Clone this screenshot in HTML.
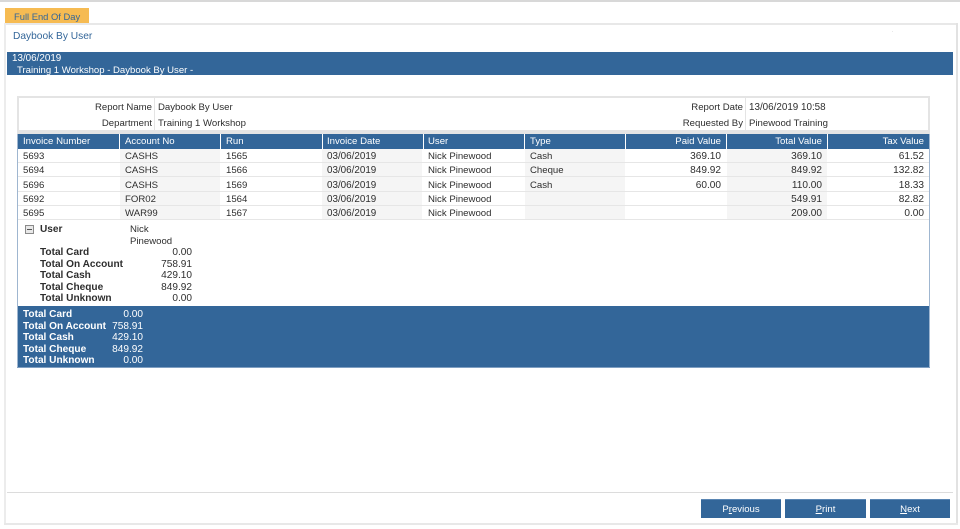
<!DOCTYPE html>
<html><head><meta charset="utf-8"><style>
html,body{margin:0;padding:0;background:#fff}
#p{position:relative;width:960px;height:529px;overflow:hidden;background:#fff;font:9.6px/15px "Liberation Sans",sans-serif;color:#2e2e2e}
#p div{position:absolute}
.t{white-space:nowrap;height:13px}
.r{text-align:right;white-space:nowrap;height:13px}
.h{color:#fff}
.b{font-weight:bold;font-size:10.1px}
.w{color:#fff}
.n{font-size:10.1px}
.d{font-size:9.85px}
.btn{background:#336699;color:#fff;top:499px;height:19px;line-height:20px;text-align:center;border-top:1px solid #5a86b3;box-sizing:border-box}
u{text-decoration:underline}
</style></head><body><div id="p">
<div style="left:0;top:0;width:960px;height:2px;background:#d8d8d8"></div>
<div style="left:4px;top:23px;width:953px;height:2px;background:#e8e8e8"></div>
<div style="left:4px;top:23px;width:2px;height:502px;background:#ececec"></div>
<div style="left:956px;top:23px;width:2px;height:502px;background:#e2e2e2"></div>
<div style="left:4px;top:523px;width:954px;height:2px;background:#e8e8e8"></div>
<div style="left:5px;top:8px;width:84px;height:15px;background:#f6bb52"></div>
<div class="t" style="left:14px;top:9px;color:#336699;font-size:9.4px">Full End Of Day</div>
<div class="t" style="left:13px;top:29px;color:#336699;font-size:10.2px">Daybook By User</div>
<div style="left:892px;top:31px;width:1px;height:1px;background:#e8e8e8"></div>
<div style="left:7px;top:52px;width:946px;height:23px;background:#336699"></div>
<div class="t w" style="left:12px;top:51px;font-size:9.85px">13/06/2019</div>
<div class="t w" style="left:17px;top:63px;font-size:9.55px">Training 1 Workshop - Daybook By User -</div>

<div style="left:17px;top:96px;width:909px;height:32px;border:2px solid #e4e4e4"></div>
<div style="left:154px;top:97px;width:1px;height:33px;background:#e4e4e4"></div>
<div style="left:745px;top:97px;width:1px;height:33px;background:#e4e4e4"></div>
<div class="r" style="left:30px;width:122px;top:100px">Report Name</div>
<div class="r" style="left:30px;width:122px;top:116px">Department</div>
<div class="t" style="left:158px;top:100px">Daybook By User</div>
<div class="t" style="left:158px;top:116px">Training 1 Workshop</div>
<div class="r" style="left:640px;width:103px;top:100px">Report Date</div>
<div class="r" style="left:640px;width:103px;top:116px">Requested By</div>
<div class="t d" style="left:749px;top:100px">13/06/2019 10:58</div>
<div class="t" style="left:749px;top:116px">Pinewood Training</div>

<div style="left:17px;top:133px;width:1px;height:235px;background:#9fb6d0"></div>
<div style="left:929px;top:133px;width:1px;height:235px;background:#9fb6d0"></div>
<div style="left:17px;top:132px;width:913px;height:2px;background:#e4e4e4"></div>

<div style="left:120px;top:149px;width:100px;height:70px;background:#f5f5f5"></div>
<div style="left:322px;top:149px;width:100px;height:70px;background:#f5f5f5"></div>
<div style="left:525px;top:149px;width:100px;height:70px;background:#f5f5f5"></div>
<div style="left:727px;top:149px;width:100px;height:70px;background:#f5f5f5"></div>

<div style="left:18px;top:134px;width:911px;height:15px;background:#336699"></div>
<div style="left:119px;top:134px;width:1px;height:15px;background:#fff"></div>
<div style="left:220px;top:134px;width:1px;height:15px;background:#fff"></div>
<div style="left:322px;top:134px;width:1px;height:15px;background:#fff"></div>
<div style="left:423px;top:134px;width:1px;height:15px;background:#fff"></div>
<div style="left:524px;top:134px;width:1px;height:15px;background:#fff"></div>
<div style="left:625px;top:134px;width:1px;height:15px;background:#fff"></div>
<div style="left:726px;top:134px;width:1px;height:15px;background:#fff"></div>
<div style="left:827px;top:134px;width:1px;height:15px;background:#fff"></div>

<div class="t h" style="left:23px;top:134px">Invoice Number</div>
<div class="t h" style="left:125px;top:134px">Account No</div>
<div class="t h" style="left:226px;top:134px">Run</div>
<div class="t h" style="left:327px;top:134px">Invoice Date</div>
<div class="t h" style="left:428px;top:134px">User</div>
<div class="t h" style="left:530px;top:134px">Type</div>
<div class="r h" style="left:630px;width:91px;top:134px">Paid Value</div>
<div class="r h" style="left:732px;width:90px;top:134px">Total Value</div>
<div class="r h" style="left:832px;width:92px;top:134px">Tax Value</div>

<div style="left:18px;top:162px;width:911px;height:1px;background:#e6e6e6"></div>
<div style="left:18px;top:176px;width:911px;height:1px;background:#e6e6e6"></div>
<div style="left:18px;top:191px;width:911px;height:1px;background:#e6e6e6"></div>
<div style="left:18px;top:205px;width:911px;height:1px;background:#e6e6e6"></div>
<div style="left:18px;top:219px;width:911px;height:1px;background:#e6e6e6"></div>

<div class="t" style="left:23px;top:149px">5693</div><div class="t" style="left:125px;top:149px">CASHS</div><div class="t" style="left:226px;top:149px">1565</div><div class="t d" style="left:327px;top:149px">03/06/2019</div><div class="t" style="left:428px;top:149px">Nick Pinewood</div><div class="t" style="left:530px;top:149px">Cash</div><div class="r n" style="left:630px;width:91px;top:149px">369.10</div><div class="r n" style="left:732px;width:90px;top:149px">369.10</div><div class="r n" style="left:832px;width:92px;top:149px">61.52</div>
<div class="t" style="left:23px;top:163px">5694</div><div class="t" style="left:125px;top:163px">CASHS</div><div class="t" style="left:226px;top:163px">1566</div><div class="t d" style="left:327px;top:163px">03/06/2019</div><div class="t" style="left:428px;top:163px">Nick Pinewood</div><div class="t" style="left:530px;top:163px">Cheque</div><div class="r n" style="left:630px;width:91px;top:163px">849.92</div><div class="r n" style="left:732px;width:90px;top:163px">849.92</div><div class="r n" style="left:832px;width:92px;top:163px">132.82</div>
<div class="t" style="left:23px;top:178px">5696</div><div class="t" style="left:125px;top:178px">CASHS</div><div class="t" style="left:226px;top:178px">1569</div><div class="t d" style="left:327px;top:178px">03/06/2019</div><div class="t" style="left:428px;top:178px">Nick Pinewood</div><div class="t" style="left:530px;top:178px">Cash</div><div class="r n" style="left:630px;width:91px;top:178px">60.00</div><div class="r n" style="left:732px;width:90px;top:178px">110.00</div><div class="r n" style="left:832px;width:92px;top:178px">18.33</div>
<div class="t" style="left:23px;top:192px">5692</div><div class="t" style="left:125px;top:192px">FOR02</div><div class="t" style="left:226px;top:192px">1564</div><div class="t d" style="left:327px;top:192px">03/06/2019</div><div class="t" style="left:428px;top:192px">Nick Pinewood</div><div class="r n" style="left:732px;width:90px;top:192px">549.91</div><div class="r n" style="left:832px;width:92px;top:192px">82.82</div>
<div class="t" style="left:23px;top:206px">5695</div><div class="t" style="left:125px;top:206px">WAR99</div><div class="t" style="left:226px;top:206px">1567</div><div class="t d" style="left:327px;top:206px">03/06/2019</div><div class="t" style="left:428px;top:206px">Nick Pinewood</div><div class="r n" style="left:732px;width:90px;top:206px">209.00</div><div class="r n" style="left:832px;width:92px;top:206px">0.00</div>

<div style="left:25px;top:225px;width:7px;height:7px;border:1px solid #8a8a8a;background:#e8e8e8"></div>
<div style="left:27px;top:229px;width:5px;height:1px;background:#555"></div>
<div class="t b" style="left:40px;top:222px">User</div>
<div class="t" style="left:130px;top:222px">Nick</div>
<div class="t" style="left:130px;top:234px">Pinewood</div>

<div class="t b" style="left:40px;top:245px">Total Card</div><div class="r n" style="left:130px;width:62px;top:245px">0.00</div>
<div class="t b" style="left:40px;top:257px">Total On Account</div><div class="r n" style="left:130px;width:62px;top:257px">758.91</div>
<div class="t b" style="left:40px;top:268px">Total Cash</div><div class="r n" style="left:130px;width:62px;top:268px">429.10</div>
<div class="t b" style="left:40px;top:280px">Total Cheque</div><div class="r n" style="left:130px;width:62px;top:280px">849.92</div>
<div class="t b" style="left:40px;top:291px">Total Unknown</div><div class="r n" style="left:130px;width:62px;top:291px">0.00</div>

<div style="left:18px;top:306px;width:911px;height:61px;background:#336699"></div>
<div style="left:17px;top:367px;width:913px;height:1px;background:#7f9fc2"></div>
<div class="t b w" style="left:23px;top:307px">Total Card</div><div class="r w n" style="left:90px;width:53px;top:307px">0.00</div>
<div class="t b w" style="left:23px;top:319px">Total On Account</div><div class="r w n" style="left:90px;width:53px;top:319px">758.91</div>
<div class="t b w" style="left:23px;top:330px">Total Cash</div><div class="r w n" style="left:90px;width:53px;top:330px">429.10</div>
<div class="t b w" style="left:23px;top:342px">Total Cheque</div><div class="r w n" style="left:90px;width:53px;top:342px">849.92</div>
<div class="t b w" style="left:23px;top:353px">Total Unknown</div><div class="r w n" style="left:90px;width:53px;top:353px">0.00</div>

<div style="left:7px;top:492px;width:946px;height:1px;background:#dcdcdc"></div>
<div class="btn" style="left:701px;width:80px">P<u>r</u>evious</div>
<div class="btn" style="left:785px;width:81px"><u>P</u>rint</div>
<div class="btn" style="left:870px;width:80px"><u>N</u>ext</div>
</div></body></html>
